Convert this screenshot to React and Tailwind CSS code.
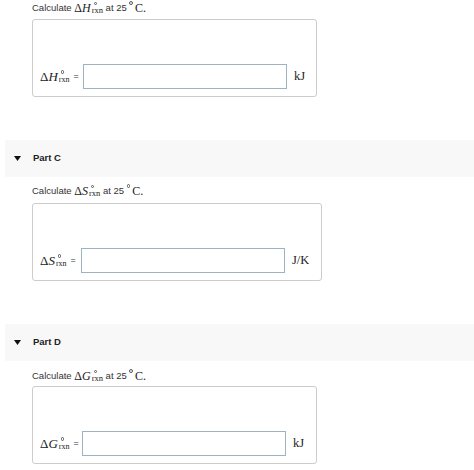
import React from "react";

function Ring({ size = 4, className = "" }) {
  return (
    <span
      className={`inline-block rounded-full border-[0.8px] border-[#555] ${className}`}
      style={{ width: size, height: size }}
    />
  );
}

function Sym({ letter, big }) {
  return (
    <span
      className={`font-['Liberation_Serif',serif] ${big ? "text-[13px]" : "text-[12px]"} text-[#222] inline-flex items-center leading-none`}
    >
      <span>Δ</span>
      <span className="italic">{letter}</span>
      <span className={`inline-flex flex-col items-start leading-none ${big ? "text-[8px]" : "text-[8.5px]"} ml-[1px]`}>
        <Ring size={3.5} className="ml-[2px] mb-[1px]" />
        <span className="leading-[7px] mt-[1px]">rxn</span>
      </span>
    </span>
  );
}

function Prompt({ letter }) {
  return (
    <p className="font-['Liberation_Sans',Arial,sans-serif] text-[9.5px] leading-[16px] text-[#333] flex items-center">
      <span>Calculate&nbsp;</span>
      <Sym letter={letter} />
      <span>&nbsp;at 25&nbsp;</span>
      <span className="font-['Liberation_Serif',serif] text-[12px] text-[#222] inline-flex items-start leading-none">
        <Ring size={3.5} className="mr-[2px] -mt-[1px]" />
        <span>C.</span>
      </span>
    </p>
  );
}

function AnswerBox({ letter, unit, boxW, labelW, className = "" }) {
  return (
    <div
      className={`border border-[#cccccc] rounded-[3px] bg-white h-[78px] pt-[44px] pl-[7px] ${className}`}
      style={{ width: boxW }}
    >
      <div className="flex items-center h-[25px]">
        <div className="flex items-center" style={{ width: labelW }}>
          <Sym letter={letter} big />
          <span className="font-['Liberation_Sans',Arial,sans-serif] text-[9px] text-[#333] ml-[4px]">=</span>
        </div>
        <div className="w-[204px] h-[25px] border border-[#9db4c0] bg-white" />
        <span className="font-['Liberation_Serif',serif] text-[12.5px] text-[#222] ml-[7px]">{unit}</span>
      </div>
    </div>
  );
}

function PartHeader({ label }) {
  return (
    <div className="ml-[5px] h-[37px] bg-[#f8f8f8] flex items-center">
      <svg width="7" height="5" viewBox="0 0 7 5" className="ml-[9px] mr-[12px]">
        <polygon points="0,0 7,0 3.5,5" fill="#111" />
      </svg>
      <span className="font-['Liberation_Sans',Arial,sans-serif] font-bold text-[9.5px] text-[#222]">{label}</span>
    </div>
  );
}

export default function App() {
  return (
    <div className="w-[474px] h-[470px] bg-white overflow-hidden">
      <div className="pl-[32px]">
        <Prompt letter="H" />
        <AnswerBox letter="H" unit="kJ" boxW={285} labelW={43} className="mt-[3px]" />
      </div>
      <div className="mt-[43px]">
        <PartHeader label="Part C" />
      </div>
      <div className="pl-[32px] mt-[6px]">
        <Prompt letter="S" />
        <AnswerBox letter="S" unit="J/K" boxW={290} labelW={41} className="mt-[4px]" />
      </div>
      <div className="mt-[43px]">
        <PartHeader label="Part D" />
      </div>
      <div className="pl-[32px] mt-[7px]">
        <Prompt letter="G" />
        <AnswerBox letter="G" unit="kJ" boxW={285} labelW={42} className="mt-[2px]" />
      </div>
    </div>
  );
}
